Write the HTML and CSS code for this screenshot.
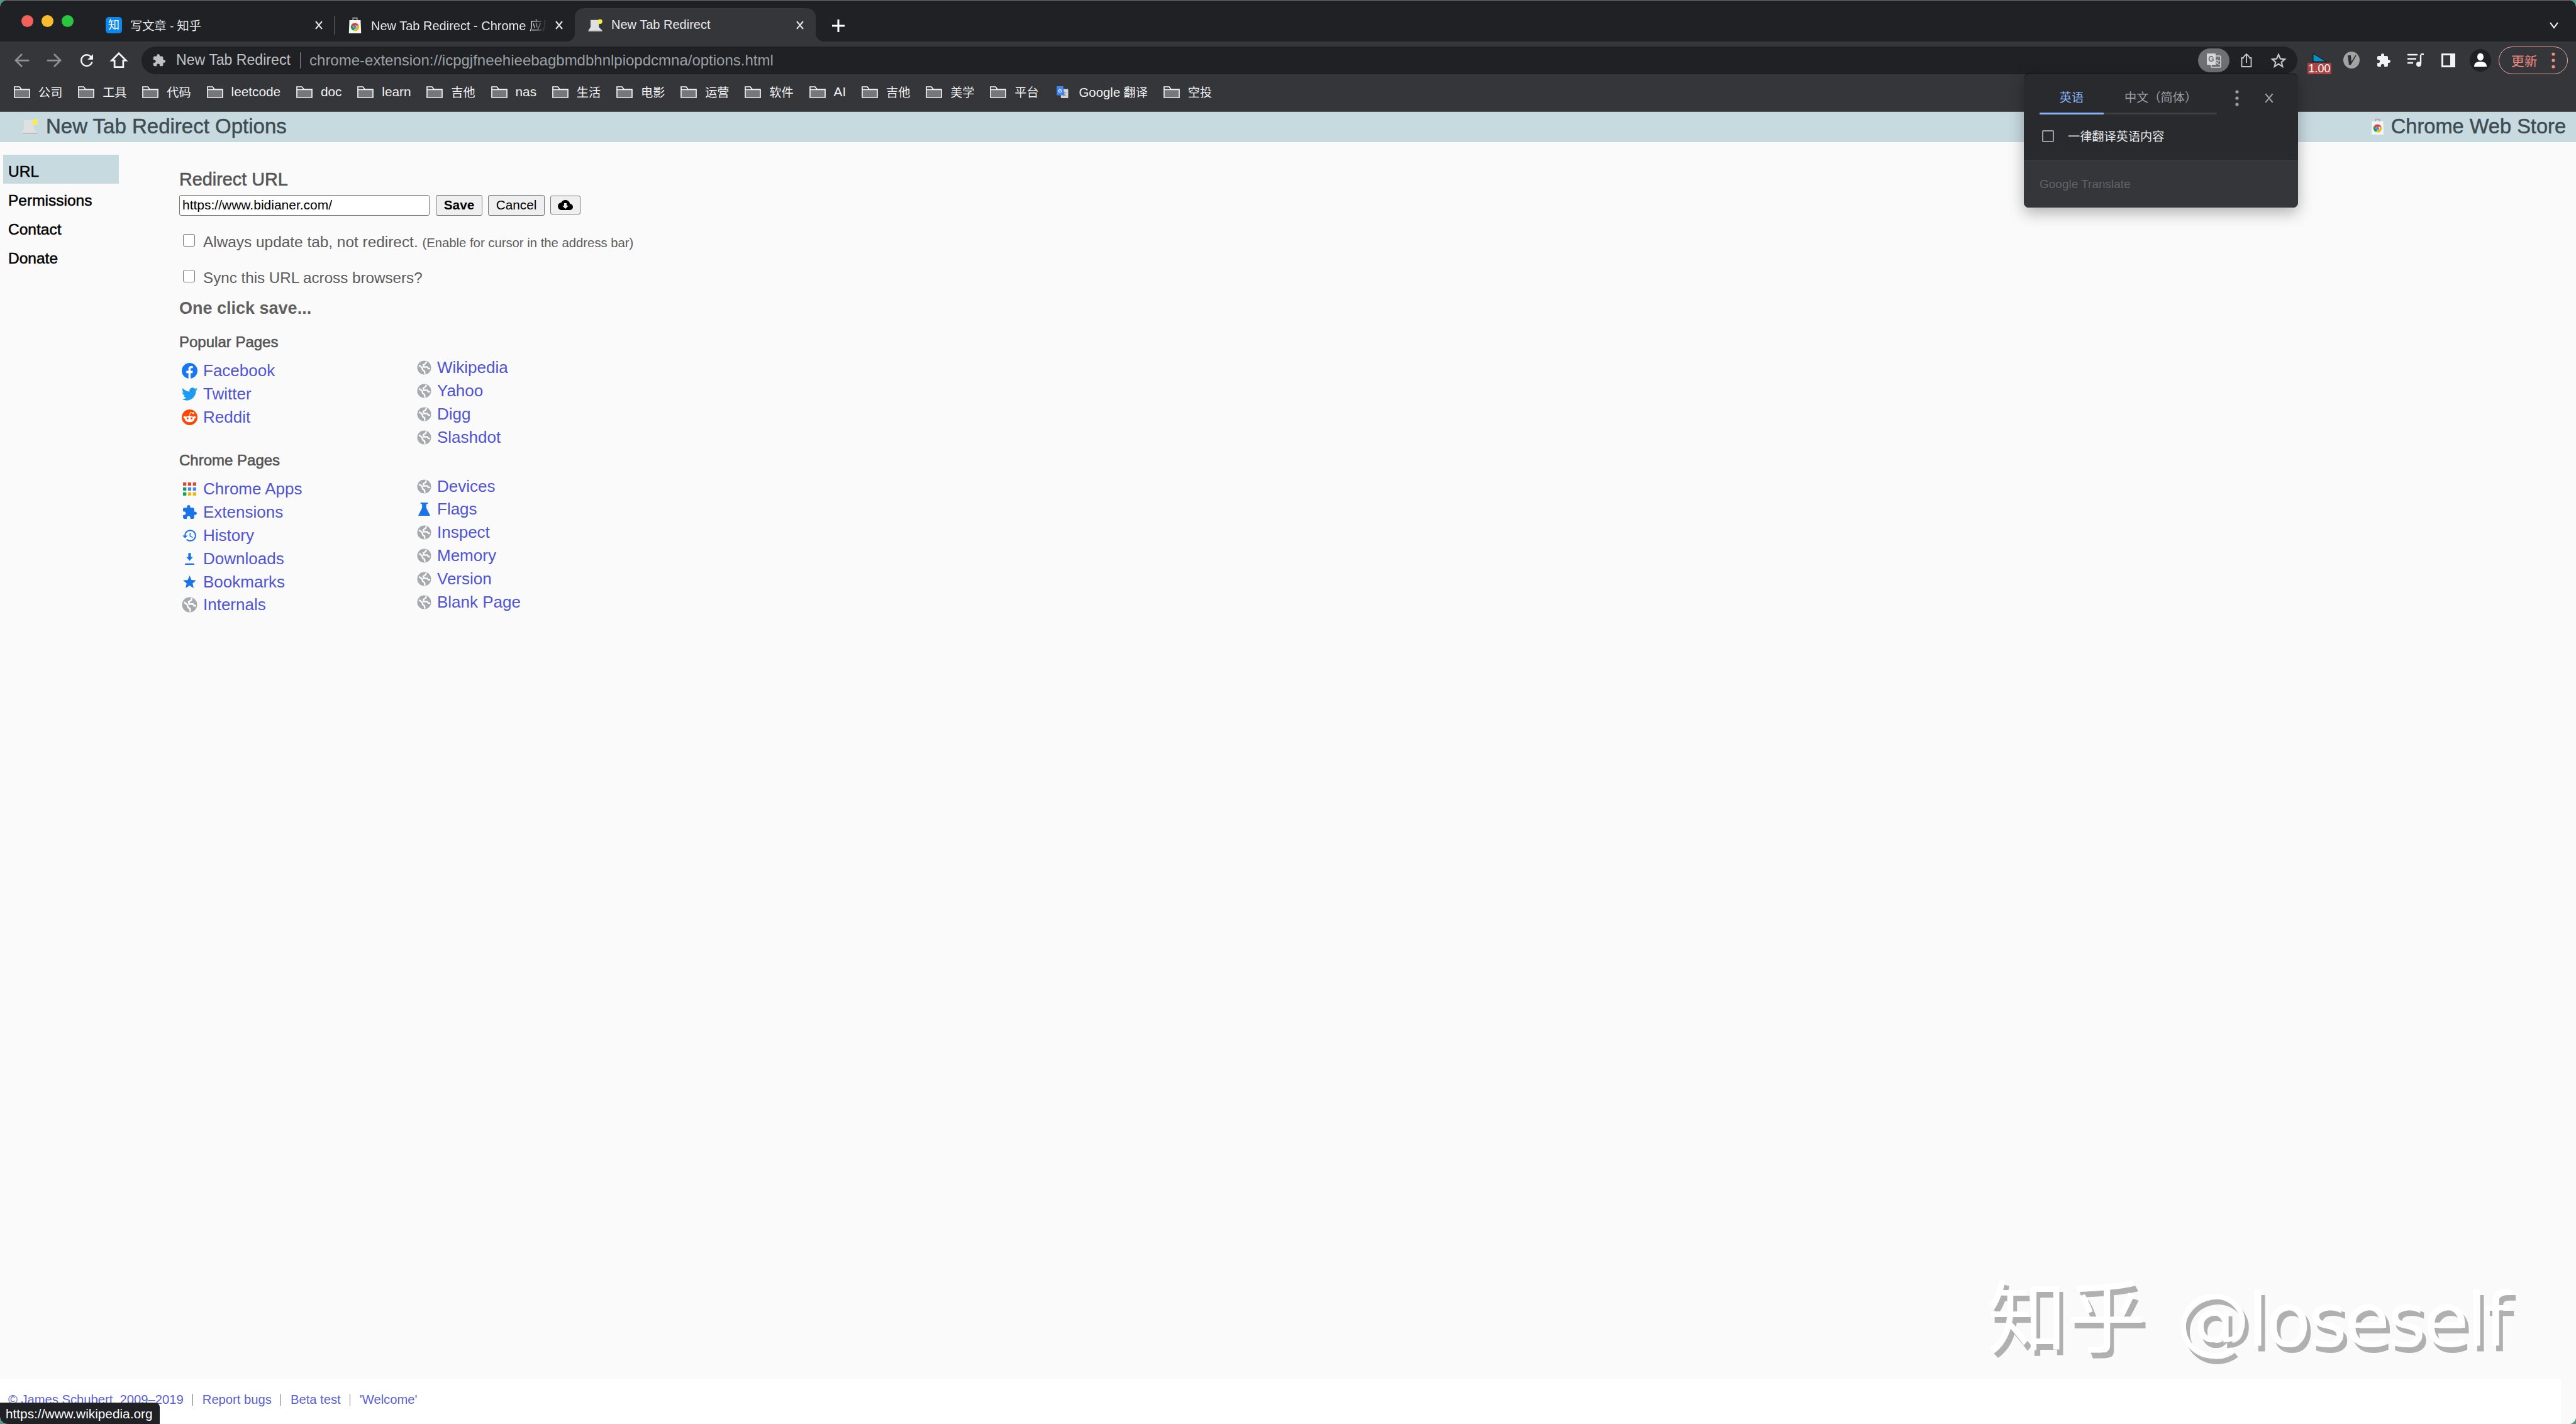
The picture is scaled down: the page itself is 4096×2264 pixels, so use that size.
FILE: index.html
```html
<!DOCTYPE html>
<html lang="zh">
<head>
<meta charset="utf-8">
<title>New Tab Redirect Options</title>
<link rel="stylesheet" href="styles.css">
</head>
<body>
<svg class="defs" xmlns="http://www.w3.org/2000/svg">
  <symbol id="x" viewBox="0 0 14 14"><path d="M2 1l10 12M12 1L2 13" fill="none" stroke="currentColor" stroke-width="2"/></symbol>
  <symbol id="folder" viewBox="0 0 26 19"><path d="M2 6h22.500v11.500H2z" fill="#76777a"/><path d="M1 1h8l3 4h13v13H1zM1 5.500h24" fill="none" stroke="#f1f3f4" stroke-width="1.700"/></symbol>
  <symbol id="puzzle" viewBox="0 0 24 24"><path fill="currentColor" d="M20.500 11H19V7c0-1.100-.9-2-2-2h-4V3.500C13 2.120 11.880 1 10.500 1S8 2.120 8 3.500V5H4c-1.100 0-1.990.9-1.990 2v3.800H3.500c1.490 0 2.700 1.210 2.700 2.700s-1.210 2.700-2.700 2.700H2V20c0 1.100.9 2 2 2h3.800v-1.500c0-1.490 1.210-2.700 2.700-2.700 1.490 0 2.700 1.210 2.700 2.700V22H17c1.100 0 2-.9 2-2v-4h1.500c1.380 0 2.500-1.120 2.500-2.500S21.880 11 20.500 11z"/></symbol>
  <symbol id="globe" viewBox="0 0 24 24"><circle cx="12" cy="12" r="11.500" fill="#a6a9ae"/><path d="M3.500 8l5 4 1 4 3 2 .5 4.500M15.500 2l-1 3-4 2.500 1 3.500h5.500l2 2.500h3" fill="none" stroke="#fafafa" stroke-width="2.600"/></symbol>
  <symbol id="newtab" viewBox="0 0 30 26"><path d="M6 3h14l2 2v12l6 6v2H2v-2l4-6z" fill="#dfe0df"/><path d="M3 24h25" stroke="#bfc2c2" stroke-width="2"/><circle cx="24" cy="6" r="4.500" fill="#f7ee4a"/></symbol>
  <symbol id="store" viewBox="0 0 24 32"><path d="M8 6V2h8v4" fill="none" stroke="#aaa" stroke-width="2"/><path d="M1 6h22l1 26H0z" fill="#f4f4f4"/><path d="M12 12a8 8 0 0 1 7.500 5H12a4 4 0 0 0-4 3l-3-5a8 8 0 0 1 7-3z" fill="#db4437"/><path d="M5 15a8 8 0 0 0 4 12l3-5a3.500 3.500 0 0 1-4-2z" fill="#0f9d58"/><path d="M19.500 17a8 8 0 0 1-9.500 10.500l3-5a3.500 3.500 0 0 0 2.800-5.500z" fill="#f4b400"/><circle cx="12" cy="20" r="3" fill="#4285f4"/></symbol>
</svg>

<div class="window">
  <div class="tabstrip">
    <div class="lights"><i class="light red"></i><i class="light amber"></i><i class="light green"></i></div>
    <div class="tab first">
      <span class="zhihu">知</span>
      <span class="tab-title">写文章 - 知乎</span>
      <svg class="tab-x"><use href="#x"/></svg>
    </div>
    <div class="tab">
      <svg class="favicon"><use href="#store"/></svg>
      <span class="tab-title fade wide">New Tab Redirect - Chrome 应用商店</span>
      <svg class="tab-x"><use href="#x"/></svg>
    </div>
    <div class="tab active">
      <svg class="favicon"><use href="#newtab"/></svg>
      <span class="tab-title wide">New Tab Redirect</span>
      <svg class="tab-x"><use href="#x"/></svg>
    </div>
    <svg class="plus" viewBox="0 0 22 22"><path d="M11 1v20M1 11h20" stroke="#fff" stroke-width="3"/></svg>
    <svg class="chevron" viewBox="0 0 16 12"><path d="M2 2l6 8 6-8" fill="none" stroke="#fff" stroke-width="2"/></svg>
  </div>

  <div class="toolbar">
    <span class="nav-btn"><svg class="nav-ico dim" viewBox="0 0 24 24"><path d="M21 12H4M12 4l-8 8 8 8" fill="none" stroke="currentColor" stroke-width="2.200"/></svg></span>
    <span class="nav-btn"><svg class="nav-ico dim" viewBox="0 0 24 24"><path d="M3 12h17M12 4l8 8-8 8" fill="none" stroke="currentColor" stroke-width="2.200"/></svg></span>
    <span class="nav-btn"><svg class="nav-ico" viewBox="0 0 24 24"><path fill="currentColor" d="M17.650 6.350A7.950 7.950 0 0 0 12 4c-4.420 0-7.990 3.580-7.990 8s3.570 8 7.990 8c3.730 0 6.840-2.550 7.730-6h-2.080A5.990 5.990 0 0 1 12 18c-3.310 0-6-2.690-6-6s2.690-6 6-6c1.660 0 3.140.69 4.220 1.780L13 11h7V4l-2.350 2.350z"/></svg></span>
    <span class="nav-btn"><svg class="nav-ico" viewBox="0 0 24 24"><path d="M12 3L3 12h3.500v8.500h11V12H21z" fill="none" stroke="currentColor" stroke-width="2.200"/></svg></span>

    <div class="omnibox">
      <svg class="omni-puzzle"><use href="#puzzle"/></svg>
      <span class="omni-name">New Tab Redirect</span>
      <span class="omni-sep"></span>
      <span class="omni-url">chrome-extension://icpgjfneehieebagbmdbhnlpiopdcmna/options.html</span>
      <span class="translate-pill">
        <svg class="translate-ico" viewBox="0 0 24 24"><rect x="8" y="5" width="15" height="18" rx="1" fill="none" stroke="#d8d8d8" stroke-width="1.500"/><rect x="1" y="1" width="14" height="18" rx="1" fill="#d8d8d8"/><text x="8" y="14" class="translate-g">G</text><text x="17.500" y="18" class="translate-w">文</text></svg>
      </span>
      <svg class="share" viewBox="0 0 20 24"><path d="M6 8H2.500v14h15V8H14M10 16V2M5.500 6.500L10 2l4.500 4.500" fill="none" stroke="#c8cacd" stroke-width="1.800"/></svg>
      <svg class="star" viewBox="0 0 24 24"><path d="M12 3.500l2.700 6.100 6.600.6-5 4.400 1.500 6.500L12 17.200l-5.800 3.900 1.500-6.500-5-4.400 6.600-.6z" fill="none" stroke="#c8cacd" stroke-width="2"/></svg>
    </div>

    <div class="ext-vector">
      <svg class="ext-tri" viewBox="0 0 23 16"><path d="M1 1l21 13H1z" fill="#0b8fc7" stroke="#111" stroke-width="1"/></svg>
      <span class="ext-badge">1.00</span>
    </div>
    <svg class="ext-v" viewBox="0 0 26 27"><ellipse cx="13" cy="13.500" rx="13" ry="13.500" fill="#a3a3a3"/><path d="M7 6h5l1 10 6-10h2l-9 15H9z" fill="#2d2e31"/></svg>
    <svg class="ext-puzzle"><use href="#puzzle"/></svg>
    <svg class="ext-music" viewBox="0 0 26 21"><path d="M0 2h16M0 8.500h14M0 15h9" stroke="#f1f3f4" stroke-width="2.400"/><path d="M21 2v14" stroke="#f1f3f4" stroke-width="2.400"/><path d="M21 1h5" stroke="#f1f3f4" stroke-width="2.400"/><ellipse cx="18" cy="17" rx="4" ry="4" fill="#f1f3f4"/></svg>
    <span class="ext-panel"><i class="ext-panel-in"></i></span>
    <svg class="avatar" viewBox="0 0 34 36"><ellipse cx="17" cy="18" rx="17" ry="18" fill="#202124"/><ellipse cx="17" cy="12.500" rx="5" ry="6" fill="#fff"/><path d="M7 28c0-6 4-8 10-8s10 2 10 8z" fill="#fff"/></svg>
    <span class="update"><span class="update-text">更新</span><svg class="update-dots" viewBox="0 0 6 26"><circle cx="3" cy="3" r="2.600"/><circle cx="3" cy="13" r="2.600"/><circle cx="3" cy="23" r="2.600"/></svg></span>
  </div>

  <div class="bookmarks">
    <span class="bm"><svg class="bm-ico"><use href="#folder"/></svg>公司</span>
    <span class="bm"><svg class="bm-ico"><use href="#folder"/></svg>工具</span>
    <span class="bm"><svg class="bm-ico"><use href="#folder"/></svg>代码</span>
    <span class="bm lat"><svg class="bm-ico"><use href="#folder"/></svg>leetcode</span>
    <span class="bm lat"><svg class="bm-ico"><use href="#folder"/></svg>doc</span>
    <span class="bm lat"><svg class="bm-ico"><use href="#folder"/></svg>learn</span>
    <span class="bm"><svg class="bm-ico"><use href="#folder"/></svg>吉他</span>
    <span class="bm lat"><svg class="bm-ico"><use href="#folder"/></svg>nas</span>
    <span class="bm"><svg class="bm-ico"><use href="#folder"/></svg>生活</span>
    <span class="bm"><svg class="bm-ico"><use href="#folder"/></svg>电影</span>
    <span class="bm"><svg class="bm-ico"><use href="#folder"/></svg>运营</span>
    <span class="bm"><svg class="bm-ico"><use href="#folder"/></svg>软件</span>
    <span class="bm lat"><svg class="bm-ico"><use href="#folder"/></svg>AI</span>
    <span class="bm"><svg class="bm-ico"><use href="#folder"/></svg>吉他</span>
    <span class="bm"><svg class="bm-ico"><use href="#folder"/></svg>美学</span>
    <span class="bm"><svg class="bm-ico"><use href="#folder"/></svg>平台</span>
    <span class="bm"><svg class="bm-ico" viewBox="0 0 26 26"><rect x="10" y="6" width="16" height="20" rx="1" fill="#d4d5d6"/><path d="M1 0h14l3 20H1z" fill="#4285f4"/><text x="8" y="14" class="gt-g">G</text><text x="18" y="20" class="gt-w">文</text></svg><span class="bm-text"><span class="lat-inline">Google</span> 翻译</span></span>
    <span class="bm"><svg class="bm-ico"><use href="#folder"/></svg>空投</span>
  </div>

  <header class="page-head">
    <div class="head-item"><svg class="head-ico"><use href="#newtab"/></svg><span>New Tab Redirect Options</span></div>
    <div class="head-item"><svg class="head-store"><use href="#store"/></svg><span class="head-right">Chrome Web Store</span></div>
  </header>

  <div class="content">
    <nav class="side">
      <a class="side-item current">URL</a>
      <a class="side-item">Permissions</a>
      <a class="side-item">Contact</a>
      <a class="side-item">Donate</a>
    </nav>
    <main class="main">
      <h2 class="h-url">Redirect URL</h2>
      <div class="form-row">
        <input class="url" type="text" value="https://www.bidianer.com/">
        <button class="btn strong">Save</button>
        <button class="btn">Cancel</button>
        <button class="btn cloud"><svg class="cloud-ico" viewBox="0 0 24 24"><path fill="#000" d="M19.350 10.040C18.670 6.590 15.640 4 12 4 9.110 4 6.600 5.640 5.350 8.040 2.340 8.360 0 10.910 0 14c0 3.310 2.690 6 6 6h13c2.760 0 5-2.240 5-5 0-2.640-2.050-4.780-4.650-4.960zM17 13l-5 5-5-5h3V9h4v4h3z"/></svg></button>
      </div>
      <label class="opt first-opt"><input class="check" type="checkbox">Always update tab, not redirect.&nbsp;<small class="hint">(Enable for cursor in the address bar)</small></label>
      <label class="opt second-opt"><input class="check" type="checkbox">Sync this URL across browsers?</label>
      <h3 class="h-save">One click save...</h3>

      <h4 class="h-group popular">Popular Pages</h4>
      <div class="columns">
        <div class="col-left">
          <a class="link"><svg class="ico" viewBox="0 0 24 24"><circle cx="12" cy="12" r="12" fill="#1877f2"/><path d="M16.500 15.500l.5-3.500h-3.500V9.800c0-1 .5-1.900 2-1.900H17V5c-2.800-.5-6.800-.6-6.800 4.200V12H7v3.500h3.200V24h3.300v-8.500z" fill="#fff"/></svg>Facebook</a>
          <a class="link"><svg class="ico" viewBox="0 0 24 24"><path fill="#1d9bf0" d="M23.953 4.570a10 10 0 01-2.825.775 4.958 4.958 0 002.163-2.723c-.951.555-2.005.959-3.127 1.184a4.920 4.920 0 00-8.384 4.482C7.690 8.095 4.067 6.130 1.640 3.162a4.822 4.822 0 00-.666 2.475c0 1.710.87 3.213 2.188 4.096a4.904 4.904 0 01-2.228-.616v.06a4.923 4.923 0 003.946 4.827 4.996 4.996 0 01-2.212.085 4.936 4.936 0 004.604 3.417 9.867 9.867 0 01-6.102 2.105c-.39 0-.779-.023-1.170-.067a13.995 13.995 0 007.557 2.209c9.053 0 13.998-7.496 13.998-13.985 0-.21 0-.42-.015-.63A9.935 9.935 0 0024 4.590z"/></svg>Twitter</a>
          <a class="link"><svg class="ico" viewBox="0 0 24 24"><circle cx="12" cy="12" r="12" fill="#ff4500"/><ellipse cx="12" cy="14.500" rx="7.500" ry="5" fill="#fff"/><circle cx="4.500" cy="12" r="2" fill="#fff"/><circle cx="19.500" cy="12" r="2" fill="#fff"/><circle cx="9" cy="13.500" r="1.500" fill="#ff4500"/><circle cx="15" cy="13.500" r="1.500" fill="#ff4500"/><path d="M12 9l1-4.500 4 1" fill="none" stroke="#fff"/><circle cx="17.500" cy="5.500" r="1.500" fill="#fff"/></svg>Reddit</a>
        </div>
        <div class="col-right">
          <a class="link"><svg class="ico"><use href="#globe"/></svg>Wikipedia</a>
          <a class="link"><svg class="ico"><use href="#globe"/></svg>Yahoo</a>
          <a class="link"><svg class="ico"><use href="#globe"/></svg>Digg</a>
          <a class="link"><svg class="ico"><use href="#globe"/></svg>Slashdot</a>
        </div>
      </div>

      <h4 class="h-group chrome">Chrome Pages</h4>
      <div class="columns">
        <div class="col-left">
          <a class="link"><svg class="ico" viewBox="0 0 24 24"><rect x="2" y="2" width="5" height="5" fill="#db4437"/><rect x="9.500" y="2" width="5" height="5" fill="#db4437"/><rect x="17" y="2" width="5" height="5" fill="#db4437"/><rect x="2" y="9.500" width="5" height="5" fill="#0f9d58"/><rect x="9.500" y="9.500" width="5" height="5" fill="#4285f4"/><rect x="17" y="9.500" width="5" height="5" fill="#4285f4"/><rect x="2" y="17" width="5" height="5" fill="#0f9d58"/><rect x="9.500" y="17" width="5" height="5" fill="#f4b400"/><rect x="17" y="17" width="5" height="5" fill="#f4b400"/></svg>Chrome Apps</a>
          <a class="link"><svg class="ico blue"><use href="#puzzle"/></svg>Extensions</a>
          <a class="link"><svg class="ico blue" viewBox="0 0 24 24"><path fill="currentColor" d="M13 3a9 9 0 0 0-9 9H1l3.890 3.890.07.14L9 12H6c0-3.870 3.130-7 7-7s7 3.130 7 7-3.130 7-7 7c-1.930 0-3.680-.79-4.940-2.060l-1.420 1.420A8.954 8.954 0 0 0 13 21a9 9 0 0 0 0-18zm-1 5v5l4.280 2.540.72-1.210-3.500-2.080V8H12z"/></svg>History</a>
          <a class="link"><svg class="ico blue" viewBox="0 0 24 24"><path fill="currentColor" d="M17 9h-3V3h-4v6H7l5 6 5-6zM5 19v2h14v-2H5z"/></svg>Downloads</a>
          <a class="link"><svg class="ico blue" viewBox="0 0 24 24"><path fill="currentColor" d="M12 17.270L18.180 21l-1.640-7.030L22 9.240l-7.190-.61L12 2 9.190 8.630 2 9.240l5.460 4.730L5.820 21z"/></svg>Bookmarks</a>
          <a class="link"><svg class="ico"><use href="#globe"/></svg>Internals</a>
        </div>
        <div class="col-right">
          <a class="link"><svg class="ico"><use href="#globe"/></svg>Devices</a>
          <a class="link"><svg class="ico blue" viewBox="0 0 24 24"><path fill="currentColor" d="M6 1h12v2.500h-2.500V10L22 23H2l6.500-13V3.500H6z"/></svg>Flags</a>
          <a class="link"><svg class="ico"><use href="#globe"/></svg>Inspect</a>
          <a class="link"><svg class="ico"><use href="#globe"/></svg>Memory</a>
          <a class="link"><svg class="ico"><use href="#globe"/></svg>Version</a>
          <a class="link"><svg class="ico"><use href="#globe"/></svg>Blank Page</a>
        </div>
      </div>
    </main>
  </div>

  <div class="foot-wrap">
    <footer class="foot">
      <a>© James Schubert, 2009–2019</a><i class="foot-sep"></i>
      <a>Report bugs</a><i class="foot-sep"></i>
      <a>Beta test</a><i class="foot-sep"></i>
      <a>'Welcome'</a>
    </footer>
  </div>

  <div class="watermark"><span class="wm-cjk">知乎</span><span class="wm-lat">@loseself</span></div>
  <div class="status">https://www.wikipedia.org</div>

  <div class="popup">
    <div class="popup-top">
      <div class="popup-tabs">
        <div class="lang-tabs">
          <span class="lang on">英语</span>
          <span class="lang off">中文（简体）</span>
        </div>
        <svg class="popup-dots" viewBox="0 0 6 26"><circle cx="3" cy="3" r="2.600"/><circle cx="3" cy="13" r="2.600"/><circle cx="3" cy="23" r="2.600"/></svg>
        <svg class="popup-x"><use href="#x"/></svg>
      </div>
      <div class="popup-check"><i class="box"></i><span>一律翻译英语内容</span></div>
    </div>
    <div class="popup-bottom">Google Translate</div>
  </div>
</div>
</body>
</html>
```
FILE: styles.css
```css
* { box-sizing: border-box; }
html, body { margin: 0; padding: 0; height: 100%; }
body { background: #4f9a85; overflow: hidden; font-family: "Liberation Sans", "Noto Sans CJK SC", sans-serif; }
.defs { display: none; }
a { color: inherit; text-decoration: none; }

.window { position: relative; width: 4096px; height: 2264px; border-radius: 12px; overflow: hidden; background: #fafafa; display: flex; flex-direction: column; }

/* tab strip */
.tabstrip { height: 66.4px; background: #202124; border-top: 1.6px solid #68696c; display: flex; align-items: flex-end; flex: none; }
.lights { display: flex; gap: 13px; margin-left: 33.5px; width: 120.5px; align-self: flex-start; margin-top: 23px; }
.light { width: 19px; height: 19px; border-radius: 50%; display: block; }
.red { background: #f4605a; }
.amber { background: #fbbb2e; }
.green { background: #29c640; }
.tab { height: 53.4px; width: 382px; padding: 0 18px 0 20px; display: flex; align-items: center; gap: 13px; color: #e8eaed; font-size: 19.2px; position: relative; flex: none; }
.tab.first { width: 378px; padding-left: 14px; }
.tab.first::after { content: ""; position: absolute; right: 0; top: 12px; height: 30px; width: 1.2px; background: #5f6368; }
.tab.active { width: 383px; background: #35363a; border-radius: 14px 14px 0 0; }
.tab.active::before, .tab.active::after { content: ""; position: absolute; bottom: 0; width: 14px; height: 14px; }
.tab.active::before { left: -14px; background: radial-gradient(circle at 0 0, #202124 14px, #35363a 14.5px); }
.tab.active::after { right: -14px; background: radial-gradient(circle at 100% 0, #202124 14px, #35363a 14.5px); }
.zhihu { width: 26px; height: 26px; border-radius: 5px; background: #0f88eb; color: #fff; font-size: 18px; text-align: center; line-height: 26px; flex: none; }
.favicon { width: 25px; height: 26px; flex: none; }
.tab-title { flex: 1; white-space: nowrap; overflow: hidden; min-width: 0; }
.tab-title.wide { font-size: 20px; }
.fade { -webkit-mask-image: linear-gradient(90deg, #000 90%, transparent); mask-image: linear-gradient(90deg, #000 90%, transparent); }
.tab-x { width: 14px; height: 14px; color: #e8eaed; flex: none; }
.plus { width: 22px; height: 22px; margin: 0 0 14px 25px; flex: none; }
.chevron { width: 16px; height: 12px; margin: 0 27px 20px auto; flex: none; }

/* toolbar */
.toolbar { height: 52px; background: #35363a; padding: 7.2px 0 0 9px; display: flex; align-items: center; flex: none; color: #dadce0; }
.nav-btn { width: 51.5px; display: flex; justify-content: center; flex: none; }
.nav-ico { width: 30px; height: 30px; color: #f1f3f4; }
.nav-ico.dim { color: #8f9194; }
.omnibox { width: 3428px; height: 44.8px; margin-left: 10px; border-radius: 22.4px; background: #202124; display: flex; align-items: center; padding: 0 17px; font-size: 24px; flex: none; }
.omni-puzzle { width: 22px; height: 24px; color: #bdc1c6; flex: none; }
.omni-name { margin-left: 16px; color: #bfc1c4; white-space: nowrap; font-size: 23.1px; }
.omni-sep { width: 1.2px; height: 26px; background: #8a8c90; margin: 0 14px 0 15px; }
.omni-url { color: #9aa0a6; white-space: nowrap; }
.translate-pill { margin-left: auto; width: 50px; height: 38px; border-radius: 19px; background: #6f7073; display: flex; align-items: center; justify-content: center; }
.translate-ico { width: 24px; height: 24px; }
.translate-g { font-size: 12px; font-weight: bold; text-anchor: middle; fill: #6f7073; }
.translate-w { font-size: 9px; text-anchor: middle; fill: #d8d8d8; }
.share { width: 20px; height: 24px; margin-left: 17px; flex: none; }
.star { width: 26px; height: 26px; margin-left: 28px; flex: none; }
.ext-vector { width: 38px; height: 34.5px; margin-left: 16px; align-self: flex-end; flex: none; display: flex; flex-direction: column; align-items: center; }
.ext-tri { width: 23px; height: 16px; flex: none; }
.ext-badge { width: 38px; height: 19px; background: #a94442; border-radius: 2px; color: #fff; font-size: 18px; line-height: 19px; text-align: center; flex: none; }
.ext-v { width: 26px; height: 27px; margin-left: 19px; flex: none; }
.ext-puzzle { width: 24px; height: 24px; margin-left: 26px; color: #f1f3f4; flex: none; }
.ext-music { width: 26px; height: 21px; margin-left: 26px; flex: none; }
.ext-panel { width: 22px; height: 22px; margin-left: 28px; background: #f1f3f4; padding: 3px 8px 3px 3px; flex: none; display: block; }
.ext-panel-in { display: block; width: 11px; height: 16px; background: #35363a; }
.avatar { width: 34px; height: 36px; margin-left: 23px; flex: none; }
.update { width: 110px; height: 44.8px; margin-left: 12px; border: 1.6px solid #e6a8a2; border-radius: 22.4px; display: flex; align-items: center; padding-left: 19px; color: #f28b82; font-size: 20.8px; flex: none; }
.update-dots { width: 6px; height: 26px; margin-left: 22px; fill: #f28b82; }

/* bookmarks */
.bookmarks { height: 59.2px; background: #35363a; border-bottom: 1.6px solid #54575c; padding: 0 0 2px 22px; display: flex; align-items: center; gap: 24.8px; color: #f1f3f4; font-size: 19.2px; flex: none; }
.bm { display: flex; align-items: center; gap: 13px; white-space: nowrap; }
.bm.lat { font-size: 20.8px; }
.lat-inline { font-size: 20.4px; }
.bm-ico { width: 26px; height: 19px; flex: none; }
.gt-g { font-size: 11px; font-weight: bold; fill: #fff; text-anchor: middle; }
.gt-w { font-size: 9px; fill: #777; text-anchor: middle; }

/* page header */
.page-head { height: 48px; padding: 0 16px 2px 32px; background: #c7dae0; display: flex; justify-content: space-between; align-items: center; color: #3f4c52; font-size: 33px; -webkit-text-stroke: .5px #3f4c52; flex: none; }
.head-item { display: flex; align-items: center; gap: 11px; }
.head-right { font-size: 32.6px; }
.head-ico { width: 30px; height: 26px; flex: none; }
.head-store { width: 21px; height: 26px; flex: none; }

/* content */
.content { flex: 1; display: flex; min-height: 0; color: #555; }
.side { width: 184px; margin-left: 5px; padding-top: 20.4px; flex: none; }
.side-item { display: block; height: 46px; padding: 7px 0 0 8px; line-height: 39px; font-size: 24.5px; color: #000; -webkit-text-stroke: .5px #000; }
.side-item.current { background: #c7dae0; }
.main { margin-left: 96px; padding-top: 42.4px; flex: 1; }
.h-url { margin: 0; font-size: 28.8px; line-height: 34px; font-weight: normal; -webkit-text-stroke: .6px #555; }
.form-row { margin-top: 8px; display: flex; align-items: center; gap: 9px; }
.url { width: 398px; height: 33px; margin: 0 1px 0 0; padding: 0 4px; font: 21px "Liberation Sans", sans-serif; color: #000; background: #fff; border: 1.6px solid #767676; border-radius: 3px; }
.btn { height: 33px; margin: 0; padding: 0 14px; font: 20.8px "Liberation Sans", sans-serif; color: #000; background: #efefef; border: 1.6px solid #767676; border-radius: 3px; }
.strong { font-weight: bold; width: 74px; padding: 0; }
.btn:not(.strong):not(.cloud) { width: 90px; padding: 0; }
.cloud { width: 48px; height: 30px; padding: 0; display: flex; align-items: center; justify-content: center; }
.cloud-ico { width: 24px; height: 24px; }
.opt { display: flex; align-items: center; height: 30px; font-size: 24.4px; color: #5c5c5c; white-space: nowrap; }
.first-opt { margin-top: 27px; }
.second-opt { margin-top: 26.6px; font-size: 24.2px; }
.check { appearance: none; -webkit-appearance: none; width: 19px; height: 20px; margin: 0 13px 5px 6px; flex: none; border: 1.6px solid #767676; border-radius: 3px; background: #fff; }
.hint { font-size: 20.3px; margin-top: 3px; }
.h-save { margin: 16px 0 0; font-size: 27px; line-height: 34px; font-weight: bold; color: #5f5f5f; }
.h-group { margin: 0; font-size: 24px; line-height: 30px; font-weight: normal; -webkit-text-stroke: .6px #555; }
.popular { margin-top: 22px; }
.columns + .h-group { margin-top: 3px; }
.columns { display: grid; grid-template-columns: 378px auto; }
.col-left { margin-top: 12.8px; padding-left: 4px; }
.col-right { margin-top: 8px; }
.link { display: flex; align-items: center; gap: 9px; height: 36.8px; font-size: 26px; color: #4f54d4; white-space: nowrap; }
.ico { width: 25px; height: 25px; flex: none; }
.col-right .ico { width: 23px; height: 23px; }
.blue { color: #1a73e8; }

/* footer */
.foot-wrap { height: 72px; background: #fafafa; flex: none; }
.foot { width: 4072px; height: 72px; background: #fff; padding: 0 0 5px 13px; display: flex; align-items: center; font-size: 20.2px; color: #5a5fd2; }
.foot-sep { display: block; width: 1.2px; height: 19px; background: #777; margin: 0 14.5px; }

.status { position: absolute; left: 0; bottom: 0; width: 254px; height: 34px; background: #202124; color: #fff; border-radius: 0 7px 0 0; padding-left: 9px; font-size: 20.8px; line-height: 35px; white-space: nowrap; }

.watermark { position: absolute; left: 3160px; top: 2010px; color: #fff; text-shadow: 6px 9px 0 #b0b0b0; white-space: nowrap; line-height: 150px; display: flex; align-items: baseline; }
.wm-cjk { font: 126px/150px "Noto Sans CJK SC", sans-serif; }
.wm-lat { font: 118px/150px "DejaVu Sans", sans-serif; letter-spacing: -4.200px; margin-left: 48px; }

/* translate popup */
.popup { position: absolute; left: 3218px; top: 117px; width: 436px; height: 213px; background: #292a2d; border-radius: 8px; border-top: 1.6px solid #111; box-shadow: 0 8px 24px rgba(0,0,0,.3); display: flex; flex-direction: column; overflow: hidden; }
.popup-top { flex: 1; }
.popup-tabs { display: flex; align-items: flex-start; padding: 20px 0 0 25px; }
.lang-tabs { width: 282px; height: 44px; display: flex; border-bottom: 3px solid #3c4043; }
.lang { font-size: 19.2px; line-height: 36px; height: 44px; white-space: nowrap; }
.on { width: 102px; text-align: center; color: #8ab4f8; border-bottom: 3.2px solid #8ab4f8; }
.off { margin-left: 33px; color: #9aa0a6; }
.popup-dots { width: 6px; height: 26px; margin: 5px 0 0 29px; fill: #9aa0a6; }
.popup-x { width: 16px; height: 16px; margin: 10px 0 0 40px; color: #9aa0a6; }
.popup-check { margin-top: 14px; height: 40px; display: flex; align-items: center; padding-left: 29px; gap: 22px; color: #e8eaed; font-size: 19.2px; }
.box { display: block; width: 19px; height: 19px; border: 2px solid #9aa0a6; border-radius: 2px; }
.popup-bottom { height: 75px; flex: none; background: #35363a; border-top: 1.6px solid #3e3f43; padding-left: 25px; line-height: 73px; color: #5f6368; font-size: 19px; }
```
